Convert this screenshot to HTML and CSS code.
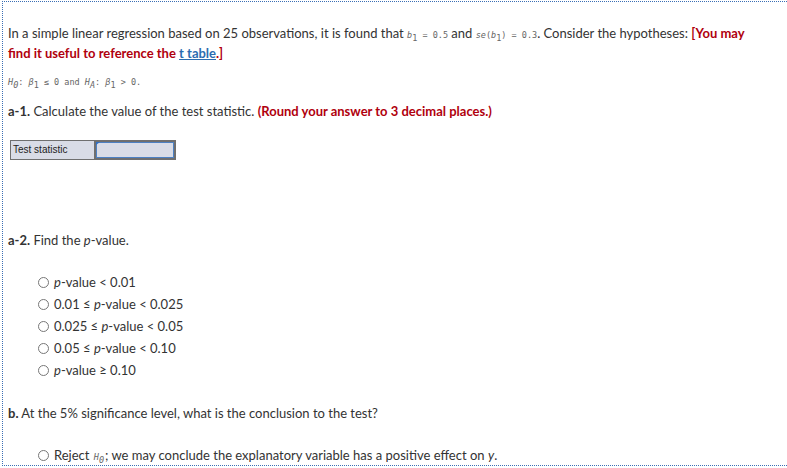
FILE: index.html
```html
<!DOCTYPE html>
<html>
<head>
<meta charset="utf-8">
<link rel="stylesheet" href="styles.css">
</head>
<body>
<div class="frame">
  <p class="intro">In a simple linear regression based on 25 observations, it is found that <span class="m"><i>b</i><sub>1</sub> = 0.5</span> and <span class="m"><i>se</i>(<i>b</i><sub>1</sub>) = 0.3</span>. Consider the hypotheses: <b class="red">[You may</b><br><b class="red">find it useful to reference the <a class="link">t table</a>.]</b></p>
  <p class="hyp m"><i>H</i><sub><i>0</i></sub>: <i>β</i><sub>1</sub> ≤ 0 and <i>H</i><sub><i>A</i></sub>: <i>β</i><sub>1</sub> &gt; 0.</p>
  <p class="q1"><b>a-1.</b> Calculate the value of the test statistic. <b class="red">(Round your answer to 3 decimal places.)</b></p>
  <div class="tbl">
    <div class="lbl">Test statistic</div>
    <div class="inp"><span class="flag"></span></div>
  </div>
  <p class="q2"><b>a-2.</b> Find the <i>p</i>-value.</p>
  <ul class="opts">
    <li><span class="radio"></span><span><i>p</i>-value &lt; 0.01</span></li>
    <li><span class="radio"></span><span>0.01 ≤ <i>p</i>-value &lt; 0.025</span></li>
    <li><span class="radio"></span><span>0.025 ≤ <i>p</i>-value &lt; 0.05</span></li>
    <li><span class="radio"></span><span>0.05 ≤ <i>p</i>-value &lt; 0.10</span></li>
    <li><span class="radio"></span><span><i>p</i>-value ≥ 0.10</span></li>
  </ul>
  <p class="q3"><b>b.</b> At the 5% significance level, what is the conclusion to the test?</p>
  <ul class="opts opts2">
    <li><span class="radio"></span><span>Reject <span class="m"><i>H</i><sub><i>0</i></sub></span>; we may conclude the explanatory variable has a positive effect on <i>y</i>.</span></li>
  </ul>
</div>
</body>
</html>
```
FILE: styles.css
```css
html, body {
  margin: 0;
  padding: 0;
  background: #fff;
}
body {
  font-family: Lato, "Open Sans", sans-serif;
  font-size: 13px;
  color: #333;
  overflow: hidden;
}
.frame {
  margin: 1px 0 0 2px;
  height: 465px;
  border-top: 1px dotted #3a6fb5;
  border-left: 1px dotted #3a6fb5;
  border-bottom: 1px dotted #3a6fb5;
  padding-left: 5px;
  overflow: hidden;
  box-sizing: border-box;
}
p { margin: 0; }
.intro {
  margin-top: 22px;
  line-height: 18px;
  width: 770px;
}
.red { color: #b0000d; }
.link {
  color: #2b6cb0;
  text-decoration: underline;
}
.m {
  font-family: "DejaVu Sans Mono", monospace;
  font-size: 8.5px;
  color: #666;
}
.m sub { font-size: 100%; vertical-align: -3px; }
sub { line-height: 0; }
.hyp {
  margin-top: 13px;
  line-height: 14px;
}
.q1 {
  margin-top: 14px;
  line-height: 17px;
}
.tbl {
  display: flex;
  margin: 20px 0 0 2px;
  width: 166px;
  height: 20px;
}
.lbl {
  width: 85px;
  border: 1px solid #6f6f6f;
  background: #d9dce6;
  font-family: Arial, "Liberation Sans", sans-serif;
  font-size: 10px;
  line-height: 18px;
  padding-left: 2px;
  box-sizing: border-box;
  color: #222;
}
.inp {
  position: relative;
  flex: 1;
  border: 2px solid #6f6f6f;
  border-left-width: 1px;
  background: #d9dce6;
  box-shadow: inset 0 0 0 1px #4d80c2;
}
.flag {
  position: absolute;
  left: 0;
  top: 0;
  width: 0;
  height: 0;
  border-top: 3px solid #2f6fc4;
  border-right: 4px solid transparent;
}
.q2 {
  margin-top: 72px;
  line-height: 17px;
}
.opts {
  list-style: none;
  margin: 22px 0 0 0;
  padding: 0 0 0 30px;
}
.opts li {
  display: flex;
  align-items: center;
  height: 22px;
  color: #333;
}
.radio {
  width: 9px;
  height: 9px;
  border: 1px solid #777;
  border-radius: 50%;
  margin-right: 5px;
  background: #fff;
  flex: none;
}
.q3 {
  margin-top: 24px;
  line-height: 17px;
}
.opts2 { margin-top: 22px; }
.opts2 .m { margin: 0 1px; }
```
